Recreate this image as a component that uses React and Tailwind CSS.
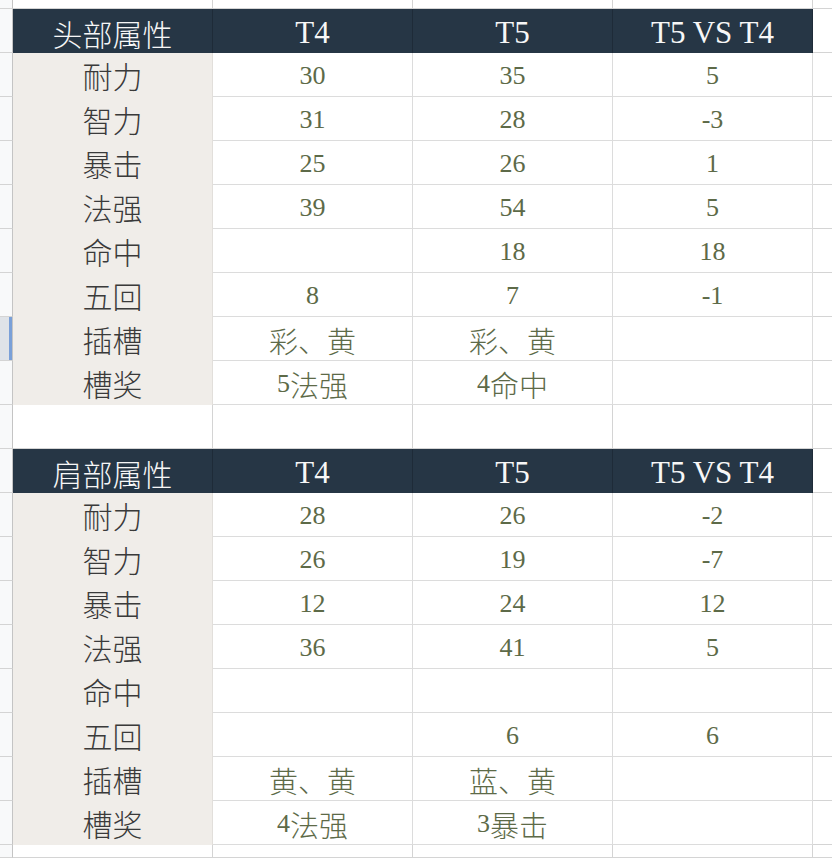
import React from "react";

const tables = [
  {
    title: "头部属性",
    rows: [
      ["耐力", "30", "35", "5"],
      ["智力", "31", "28", "-3"],
      ["暴击", "25", "26", "1"],
      ["法强", "39", "54", "5"],
      ["命中", "", "18", "18"],
      ["五回", "8", "7", "-1"],
      ["插槽", "彩、黄", "彩、黄", ""],
      ["槽奖", "5法强", "4命中", ""],
    ],
  },
  {
    title: "肩部属性",
    rows: [
      ["耐力", "28", "26", "-2"],
      ["智力", "26", "19", "-7"],
      ["暴击", "12", "24", "12"],
      ["法强", "36", "41", "5"],
      ["命中", "", "", ""],
      ["五回", "", "6", "6"],
      ["插槽", "黄、黄", "蓝、黄", ""],
      ["槽奖", "4法强", "3暴击", ""],
    ],
  },
];

const serif = "font-['Liberation_Serif','Noto_Sans_CJK_SC',serif]";
const sans = "font-['Noto_Sans_CJK_SC','Noto_Sans',sans-serif]";

// split a value into latin / CJK runs so each gets its own size
const Mixed = ({ text }) => {
  const parts = text.split(/([\u3000-\u303f\u4e00-\u9fff]+)/).filter(Boolean);
  return parts.map((p, i) =>
    /[\u3000-\u303f\u4e00-\u9fff]/.test(p) ? (
      <span key={i} className={`${sans} text-[29px] font-light`}>{p}</span>
    ) : (
      <span key={i} className={`${serif} text-[26px]`}>{p}</span>
    )
  );
};

const Gutter = ({ selected }) => (
  <div className={`w-[13px] h-full shrink-0 border-r border-b border-r-[#c4c4c4] border-b-[#d4d4d4] ${selected ? "bg-[#dfe3e8]" : "bg-[#f8f9fa]"} flex justify-end`}>
    {selected && <div className="w-[3px] h-full bg-[#7aa0d8]" />}
  </div>
);

const TopRow = ({ h }) => (
  <div className={`flex ${h}`}>
    <Gutter />
    {[0, 1, 2, 3].map((i) => (
      <div key={i} className="w-[200px] h-full border-r border-b border-[#d4d4d4] bg-white" />
    ))}
    <div className="flex-1 h-full border-b border-[#d4d4d4] bg-white" />
  </div>
);

const HeaderRow = ({ title }) => (
  <div className="flex h-[44px]">
    <Gutter />
    {[title, "T4", "T5", "T5 VS T4"].map((t, i) => (
      <div
        key={i}
        className={`w-[200px] h-full flex items-center justify-center bg-[#263645] text-[#f7f7f7] border-r border-[#1e2b38] leading-none ${i === 0 ? `${sans} text-[30px] font-light pt-[3px]` : `${serif} text-[31px] pt-[2px]`}`}
      >
        {t}
      </div>
    ))}
    <div className="flex-1 h-full border-b border-[#d4d4d4] bg-white" />
  </div>
);

const DataRow = ({ row, selected }) => (
  <div className="flex h-[44px]">
    <Gutter selected={selected} />
    <div className={`w-[200px] h-full flex items-center justify-center bg-[#f0ede9] border-r border-[#e2dfdb] text-[#3a3a3a] text-[30px] font-light leading-none ${sans}`}>
      {row[0]}
    </div>
    {row.slice(1).map((v, i) => (
      <div
        key={i}
        className="w-[200px] h-full flex items-center justify-center bg-white border-r border-b border-[#dcdcdc] text-[#5d6a48] leading-none pt-[3px]"
      >
        <Mixed text={v} />
      </div>
    ))}
    <div className="flex-1 h-full border-b border-[#d4d4d4] bg-white" />
  </div>
);

const App = () => {
  return (
    <div className="w-[832px] h-[858px] overflow-hidden bg-white">
      <TopRow h="h-[9px]" />
      {tables.map((t, ti) => (
        <div key={ti}>
          <HeaderRow title={t.title} />
          {t.rows.map((r, ri) => (
            <DataRow key={ri} row={r} selected={ti === 0 && ri === 6} />
          ))}
          {ti === 0 && <TopRow h="h-[44px]" />}
        </div>
      ))}
      <TopRow h="h-[13px]" />
    </div>
  );
};

export default App;
